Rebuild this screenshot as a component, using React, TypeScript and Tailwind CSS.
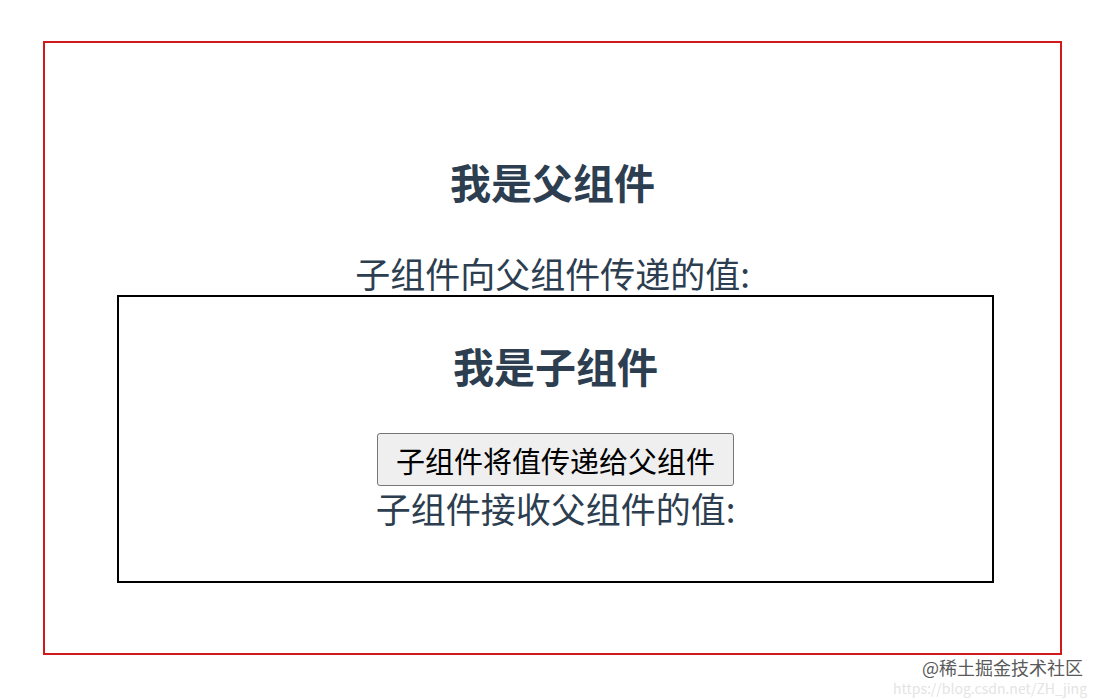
import React from 'react'

const font = { fontFamily: '"Noto Sans CJK SC", "Noto Sans", sans-serif' }

function Child() {
  return (
    <div className="ml-[72px] flex h-[288px] w-[877px] flex-col items-center border-2 border-black pt-[48px]">
      <h2 className="text-[41px] leading-[40px] font-bold text-[#2c3e50]">我是子组件</h2>
      <button className="mt-[48px] h-[53px] w-[357px] rounded-[3px] border border-[#767676] bg-[#efefef] text-[29px] leading-[40px] text-black">
        子组件将值传递给父组件
      </button>
      <p className="mt-[2px] text-[35px] leading-[40px] text-[#2c3e50]">子组件接收父组件的值:</p>
    </div>
  )
}

export default function App() {
  return (
    <div className="relative h-[699px] w-[1103px] overflow-hidden bg-white" style={font}>
      <div className="pt-[41px] pl-[43px]">
        <div className="flex h-[614px] w-[1019px] flex-col border-2 border-[#d0191c]">
          <h1 className="mt-[118px] text-center text-[41px] leading-[40px] font-bold text-[#2c3e50]">我是父组件</h1>
          <p className="mt-[52px] text-center text-[35px] leading-[40px] text-[#2c3e50]">子组件向父组件传递的值:</p>
          <div className="mt-[2px]">
            <Child />
          </div>
        </div>
      </div>
      {/* watermark */}
      <div className="absolute top-[656px] left-[922px] text-[18px] leading-[22px] text-[#5a5a5a]">@稀土掘金技术社区</div>
      <div className="absolute top-[679px] left-[893px] text-[14px] leading-[18px] text-[#e4e4e4]">https://blog.csdn.net/ZH_jing</div>
    </div>
  )
}
